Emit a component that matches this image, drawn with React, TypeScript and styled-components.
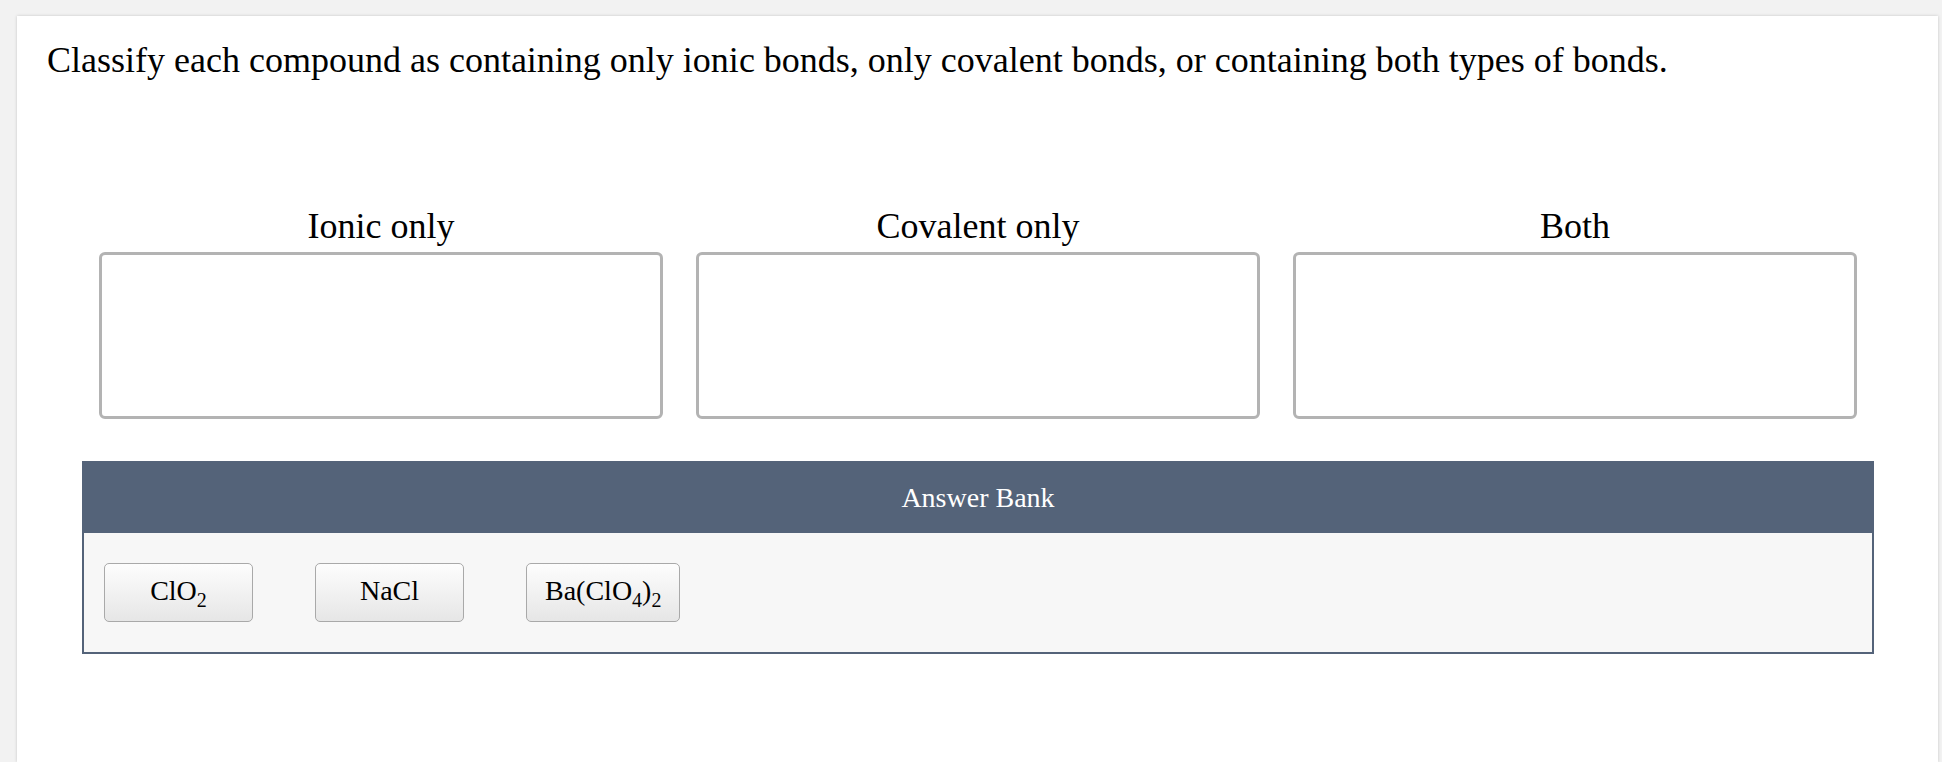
import React from "react"
import styled, { createGlobalStyle } from "styled-components"

const GlobalStyle = createGlobalStyle`
  html, body {
    margin: 0;
    padding: 0;
    background: #f2f2f2;
    font-family: "Liberation Serif", "Times New Roman", serif;
    color: #000;
  }
`

// data
const categories = ["Ionic only", "Covalent only", "Both"]

type Part = { text: string; sub?: string }
const compounds: Part[][] = [
  [{ text: "ClO", sub: "2" }],
  [{ text: "NaCl" }],
  [{ text: "Ba(ClO", sub: "4" }, { text: ")", sub: "2" }],
]

function App() {
  return (
    <>
      <GlobalStyle />
      <Page>
        <Panel>
          <Prompt>
            Classify each compound as containing only ionic bonds, only covalent
            bonds, or containing both types of bonds.
          </Prompt>
          <Targets>
            {categories.map((c) => (
              <Target key={c}>
                <TargetLabel>{c}</TargetLabel>
                <DropBox />
              </Target>
            ))}
          </Targets>
          <Bank>
            <BankHeader>Answer Bank</BankHeader>
            <BankBody>
              {compounds.map((parts, i) => (
                <Chip key={i}>
                  <span>
                    {parts.map((p, j) => (
                      <React.Fragment key={j}>
                        {p.text}
                        {p.sub && <sub>{p.sub}</sub>}
                      </React.Fragment>
                    ))}
                  </span>
                </Chip>
              ))}
            </BankBody>
          </Bank>
        </Panel>
      </Page>
    </>
  )
}

export default App

// style
const Page = styled.div`
  padding: 16px 4px 0 17px;
  min-height: 762px;
  box-sizing: border-box;
  display: flex;
`
const Panel = styled.div`
  flex: 1;
  background: #fff;
  box-shadow: 0 0 3px rgba(0, 0, 0, 0.18);
  padding: 23px 0 60px 30px;
  min-height: 746px;
  box-sizing: border-box;
`
const Prompt = styled.div`
  font-size: 36px;
  line-height: normal;
`
const Targets = styled.div`
  display: grid;
  grid-template-columns: repeat(3, 1fr);
  column-gap: 33px;
  width: 1758px;
  margin: 124px 0 0 52px;
`
const Target = styled.div`
  display: flex;
  flex-direction: column;
  align-items: stretch;
`
const TargetLabel = styled.div`
  font-size: 36px;
  line-height: normal;
  text-align: center;
  margin-bottom: 5px;
`
const DropBox = styled.div`
  height: 167px;
  box-sizing: border-box;
  border: 3px solid #b3b3b3;
  border-radius: 6px;
  background: #fff;
`
const Bank = styled.div`
  width: 1792px;
  margin: 42px 0 0 35px;
  border: 2px solid #546379;
  box-sizing: border-box;
`
const BankHeader = styled.div`
  height: 70px;
  background: #546379;
  color: #fff;
  font-size: 28px;
  display: flex;
  align-items: center;
  justify-content: center;
`
const BankBody = styled.div`
  background: #f7f7f7;
  display: flex;
  align-items: center;
  gap: 62px;
  padding: 30px 20px 30px 20px;
`
const Chip = styled.div`
  min-width: 149px;
  height: 59px;
  box-sizing: border-box;
  padding: 0 18px 4px;
  border: 1px solid #a9a9a9;
  border-radius: 5px;
  background: linear-gradient(#fdfdfd, #e6e6e6);
  font-size: 28px;
  display: flex;
  align-items: center;
  justify-content: center;
  sub {
    font-size: 20px;
    line-height: 0;
    vertical-align: -7px;
  }
`
